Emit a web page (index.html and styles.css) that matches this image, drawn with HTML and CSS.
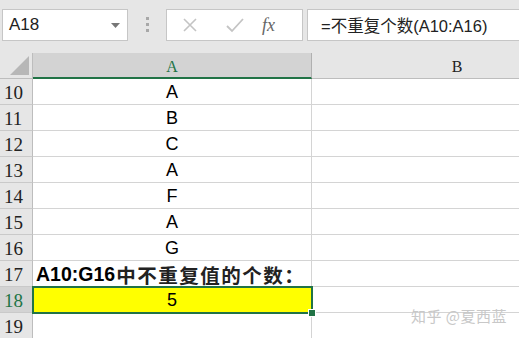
FILE: index.html
```html
<!DOCTYPE html>
<html>
<head>
<meta charset="utf-8">
<link rel="stylesheet" href="styles.css">
</head>
<body>
<div class="toolbar">
  <div class="namebox"><span class="name">A18</span><svg class="dd" width="9" height="5" viewBox="0 0 9 5"><path d="M0 0h9L4.5 5z" fill="#777"/></svg></div>
  <div class="dots"><i></i><i></i><i></i></div>
  <div class="fxbox">
    <svg class="ico" width="18" height="18" viewBox="0 0 18 18"><path d="M3 3l12 12M15 3L3 15" stroke="#c4c4c4" stroke-width="1.6" fill="none"/></svg>
    <svg class="ico" width="20" height="18" viewBox="0 0 20 18"><path d="M2 10l5 5L18 3" stroke="#c4c4c4" stroke-width="1.8" fill="none"/></svg>
    <span class="fx">fx</span>
  </div>
  <div class="formula">=不重复个数(A10:A16)</div>
</div>
<div class="sheet">
  <div class="corner"><svg width="19" height="19" viewBox="0 0 19 19"><path d="M19 0V19H0z" fill="#b7b7b7"/></svg></div>
  <div class="colh sel">A</div>
  <div class="colh colb">B</div>

  <div class="rowh">10</div><div class="cell">A</div><div class="cell b"></div>
  <div class="rowh">11</div><div class="cell">B</div><div class="cell b"></div>
  <div class="rowh">12</div><div class="cell">C</div><div class="cell b"></div>
  <div class="rowh">13</div><div class="cell">A</div><div class="cell b"></div>
  <div class="rowh">14</div><div class="cell">F</div><div class="cell b"></div>
  <div class="rowh">15</div><div class="cell">A</div><div class="cell b"></div>
  <div class="rowh">16</div><div class="cell">G</div><div class="cell b"></div>
  <div class="rowh">17</div><div class="cell label"><span class="lat">A10:G16</span><span class="cjk">中不重复值的个数：</span></div><div class="cell b"></div>
  <div class="rowh sel">18</div><div class="cell active">5<span class="selbox"></span><span class="handle"></span></div><div class="cell b"></div>
  <div class="rowh">19</div><div class="cell"></div><div class="cell b"></div>
</div>
<div class="watermark">知乎 @夏西蓝</div>
</body>
</html>
```
FILE: styles.css
```css
html, body { margin: 0; padding: 0; }
body {
  width: 519px; height: 338px; overflow: hidden; position: relative;
  background: #fff;
  font-family: "Liberation Sans", Arial, sans-serif;
}
.toolbar {
  height: 53px; background: #e6e6e6; display: flex; align-items: flex-start;
  padding-top: 9px; box-sizing: border-box; padding-left: 2px;
}
.namebox {
  width: 126px; height: 32px; box-sizing: border-box; background: #fff;
  border: 1px solid #c6c6c6; display: flex; align-items: center;
  justify-content: space-between; padding: 0 7px 0 6px;
}
.name { font-size: 17px; color: #222; }
.dots { width: 38px; display: flex; flex-direction: column; align-items: center; gap: 3px; padding-top: 8px; }
.dots i { width: 3px; height: 3px; background: #a8a8a8; display: block; }
.fxbox {
  width: 137px; height: 32px; box-sizing: border-box; background: #fff;
  border: 1px solid #c6c6c6; display: flex; align-items: center; padding-left: 14px;
}
.fxbox .ico { margin-right: 26px; }
.fxbox .ico + .ico { margin-right: 17px; }
.fx { font-family: "Liberation Serif", serif; font-style: italic; font-size: 18px; color: #666; }
.formula {
  margin-left: 4px; flex: 1; min-width: 0; height: 32px; box-sizing: border-box; background: #fff;
  border: 1px solid #c6c6c6; border-right: none; display: flex; align-items: center; padding-left: 13px;
  font-size: 16.5px; color: #222; white-space: nowrap; overflow: hidden;
  font-family: "Liberation Sans", "Noto Sans CJK SC", sans-serif;
}
.sheet {
  display: grid; grid-template-columns: 33px 279px 1fr; grid-auto-rows: 26px;
}
.corner, .colh, .rowh, .cell { box-sizing: border-box; }
.corner {
  background: #e6e6e6; border-right: 1px solid #bdbdbd; border-bottom: 1px solid #bdbdbd;
  display: flex; align-items: flex-end; justify-content: flex-end; padding: 0 3px 3px 0;
}
.colh {
  background: #e6e6e6; border-right: 1px solid #bdbdbd; border-bottom: 1px solid #bdbdbd;
  font-family: "Liberation Serif", serif; font-size: 16px; color: #333;
  display: flex; align-items: center; justify-content: center; padding-top: 3px;
}
.colh.colb { padding-left: 83px; border-right: none; color: #222; }
.colh.sel { background: #d3d3d3; color: #217346; border-bottom: 2px solid #217346; border-right-color: #b0b0b0; }
.rowh {
  background: #e6e6e6; border-right: 1px solid #bdbdbd; border-bottom: 1px solid #c9c9c9;
  font-family: "Liberation Serif", serif; font-size: 19px; color: #222;
  padding-left: 4px; display: flex; align-items: center; padding-top: 2px;
}
.rowh.sel { background: #d3d3d3; color: #217346; }
.cell {
  border-right: 1px solid #d4d4d4; border-bottom: 1px solid #d4d4d4;
  font-size: 18px; color: #000; display: flex; align-items: center; justify-content: center;
  padding-top: 1px; position: relative;
}
.cell.b { border-right: none; }
.cell.label { justify-content: flex-start; padding-left: 3px; font-weight: bold; white-space: nowrap; }
.lat { font-size: 19.5px; margin-right: 1px; }
.cjk { font-family: "Noto Sans CJK SC", sans-serif; font-size: 19.5px; font-weight: bold; color: #222; letter-spacing: 1.5px; }
.cell.active { background: #ffff00; z-index: 2; }
.selbox {
  position: absolute; left: -1px; top: -1px; right: -2px; bottom: -2px;
  border: 2px solid #217346;
}
.handle {
  position: absolute; right: -5px; bottom: -5px; width: 6px; height: 6px;
  background: #217346; border: 1px solid #fff; box-sizing: content-box;
}
.watermark {
  position: absolute; left: 411px; top: 305px;
  font-family: "Noto Sans CJK SC", sans-serif; font-size: 15px; color: #c8c8c8;
  letter-spacing: 0.5px;
}
```
